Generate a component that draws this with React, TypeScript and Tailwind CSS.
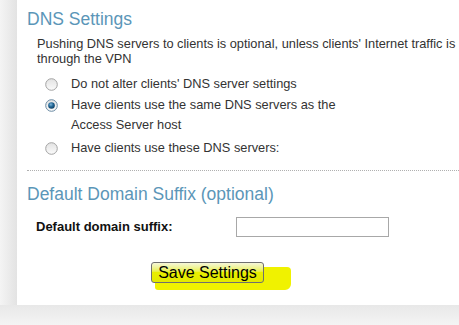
import React from 'react'

function Radio({ checked }: { checked?: boolean }) {
  return (
    <svg width="13" height="13" viewBox="0 0 13 13" className="shrink-0">
      <defs>
        <linearGradient id="rbg" x1="0" y1="0" x2="0" y2="1">
          <stop offset="0" stopColor="#e2e2e2" />
          <stop offset="1" stopColor="#fbfbfb" />
        </linearGradient>
        <radialGradient id="dot" cx="0.4" cy="0.35" r="0.7">
          <stop offset="0" stopColor="#7fb6da" />
          <stop offset="0.5" stopColor="#1f6494" />
          <stop offset="1" stopColor="#0d3b5c" />
        </radialGradient>
      </defs>
      <circle cx="6.5" cy="6.5" r="5.8" fill="url(#rbg)" stroke={checked ? '#6a8aa3' : '#a3a3a3'} strokeWidth="1" />
      {checked && <circle cx="6.5" cy="6.5" r="3.3" fill="url(#dot)" />}
    </svg>
  )
}

function Option({ checked, children }: { checked?: boolean; children: React.ReactNode }) {
  return (
    <div className="flex items-start gap-[13px]">
      <div className="h-[20px] flex items-center">
        <Radio checked={checked} />
      </div>
      <div className="leading-[20px]">{children}</div>
    </div>
  )
}

export default function App() {
  return (
    <div className="w-[459px] h-[325px] overflow-hidden flex flex-col bg-[#efefef] font-['Liberation_Sans',Arial,sans-serif]">
      <div className="flex h-[305px]">
        <div className="w-[17px] bg-gradient-to-r from-[#f4f4f4] to-[#e3e3e3]" />
        <div className="flex-1 min-w-0 bg-white pl-[10px] pt-[8px] text-[12.8px] text-[#333]">
          <h2 className="text-[17.5px] leading-[22px] text-[#5b96b8]">DNS Settings</h2>
          <p className="mt-[6px] ml-[10px] leading-[15px] whitespace-nowrap">
            Pushing DNS servers to clients is optional, unless clients' Internet traffic is
            <br />
            through the VPN
          </p>

          <div className="mt-[8px] ml-[18px] flex flex-col">
            <Option>Do not alter clients' DNS server settings</Option>
            <div className="mt-[1px]">
              <Option checked>
                Have clients use the same DNS servers as the
                <br />
                Access Server host
              </Option>
            </div>
            <div className="mt-[3px]">
              <Option>Have clients use these DNS servers:</Option>
            </div>
          </div>

          <div className="mt-[12px] border-t border-dotted border-[#b0b0b0]" />

          <h2 className="mt-[12px] text-[17.5px] leading-[22px] text-[#5b96b8]">Default Domain Suffix (optional)</h2>

          <div className="mt-[11px] ml-[9px] flex items-center h-[21px]">
            <label className="w-[200px] font-bold text-[13px] text-[#111]">Default domain suffix:</label>
            <input type="text" className="w-[153px] h-[20px] border border-[#a8a8a8] bg-white outline-none" />
          </div>

          <div className="mt-[25px] ml-[124px] relative w-[113px]">
            <div className="absolute left-[4px] top-[5px] w-[136px] h-[23px] bg-[#f0f200] rounded-[2px_4px_6px_3px] blur-[0.5px]" />
            <button className="relative w-[113px] h-[21px] border border-[#6f6f6f] rounded-[3px] bg-gradient-to-b from-[#f6f6d8] via-[#e9ef00] to-[#e4ea00] text-[16px] leading-[20px] text-black font-['Liberation_Sans',Arial,sans-serif]">
              Save Settings
            </button>
          </div>
        </div>
      </div>
      <div className="flex-1 bg-gradient-to-b from-[#e8e8e8] to-[#f4f4f4]" />
    </div>
  )
}
